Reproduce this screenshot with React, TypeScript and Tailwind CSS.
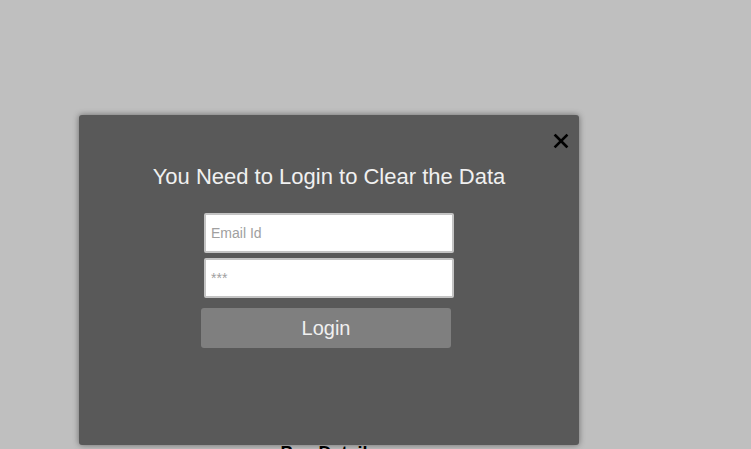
import { useState } from "react"

export default function App() {
  const [email, setEmail] = useState("")
  const [password, setPassword] = useState("")

  return (
    <div className="relative h-[449px] w-full overflow-hidden bg-[#bfbfbf] font-['Liberation_Sans',Arial,sans-serif]">
      {/* page content sitting behind the dialog */}
      <div className="ml-[79px] w-[500px] pt-[440px] text-center">
        <h2 className="text-[18px] font-bold text-black">Pan Details</h2>
      </div>

      {/* login dialog */}
      <div className="absolute left-[79px] top-[115px] h-[330px] w-[500px] rounded-[3px] bg-[#595959] shadow-[0_0_6px_rgba(0,0,0,0.45)]">
        <button className="absolute right-[9px] top-[17px] flex h-[18px] w-[18px] items-center justify-center">
          <svg viewBox="0 0 16 16" className="h-[16px] w-[16px]">
            <path d="M2.5 2.5 L13.5 13.5 M13.5 2.5 L2.5 13.5" stroke="#000" strokeWidth="2.6" strokeLinecap="square" />
          </svg>
        </button>

        <div className="flex flex-col items-center pt-[49px]">
          <h1 className="text-[22px] leading-[26px] text-[#f0f0f0]">You Need to Login to Clear the Data</h1>

          <div className="mt-[23px] flex flex-col gap-[5px]">
            <input
              value={email}
              onChange={(e) => setEmail(e.target.value)}
              placeholder="Email Id"
              className="h-[40px] w-[250px] rounded-[2px] border-2 border-[#c4c4c4] bg-white px-[5px] text-[14px] text-black outline-none placeholder:text-[#a0a0a0]"
            />
            <input
              type="password"
              value={password}
              onChange={(e) => setPassword(e.target.value)}
              placeholder="***"
              className="h-[40px] w-[250px] rounded-[2px] border-2 border-[#c4c4c4] bg-white px-[5px] text-[14px] text-black outline-none placeholder:text-[#a0a0a0]"
            />
          </div>

          <button className="mr-[6px] mt-[10px] h-[40px] w-[250px] rounded-[3px] bg-[#7f7f7f] text-[20px] text-[#f0f0f0]">
            Login
          </button>
        </div>
      </div>
    </div>
  )
}
